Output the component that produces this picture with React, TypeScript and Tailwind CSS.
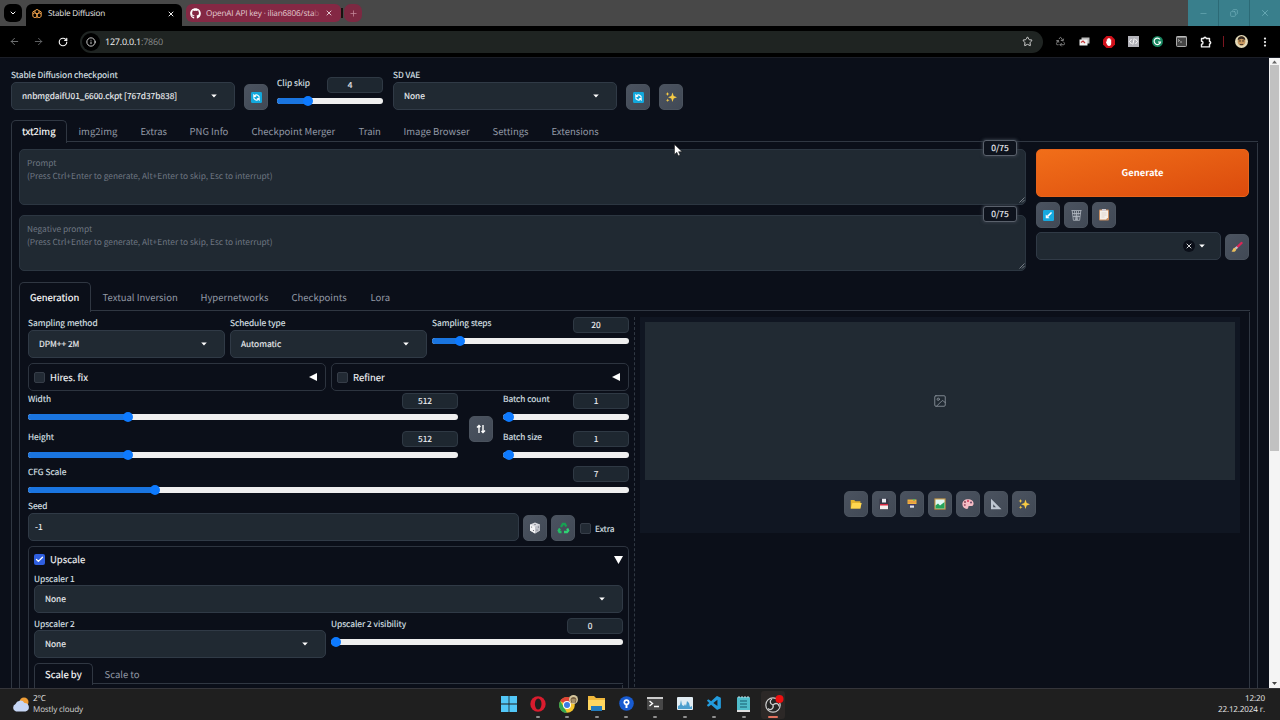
import React from "react";
import {
  ArrowLeft, ArrowRight, RotateCw, Info, Star, Minus, X, Plus, ChevronDown, Copy, Recycle, Image as ImageIcon, Check, MoreVertical,
} from "lucide-react";
import { FaGithub } from "react-icons/fa";
import { VscVscode } from "react-icons/vsc";

type Kids = { children?: React.ReactNode };

const Caret = () => (
  <svg width="6" height="4" viewBox="0 0 6 4" className="shrink-0"><path d="M.2.5h5.600L3 3.500z" fill="#fff" /></svg>
);

const Label = ({ children, low }: Kids & { low?: boolean }) => (
  <div className={`h-[13px] whitespace-nowrap text-[8.35px] ${low ? "leading-[14px]" : "leading-[12px]"} text-[#dfe3ea] [-webkit-text-stroke:0.12px_#dfe3ea]`}>{children}</div>
);

const Select = ({ value, w }: { value: string; w: string }) => (
  <div className={`flex h-[28px] ${w} shrink-0 items-center justify-between rounded-[5px] border border-[#303a46] bg-[#202932] pl-[10px] pr-[17px]`}>
    <span className="whitespace-nowrap text-[8.35px] leading-[14px] text-[#eef0f3] [-webkit-text-stroke:0.12px_#eef0f3]">{value}</span>
    <Caret />
  </div>
);

const Field = ({ label, low, children }: Kids & { label: string; low?: boolean }) => (
  <div className="flex flex-col"><Label low={low}>{label}</Label>{children}</div>
);

const Tool = ({ children, h = "h-[26px]" }: Kids & { h?: string }) => (
  <div className={`flex ${h} w-[24px] shrink-0 items-center justify-center rounded-[5px] border border-[#4a525d] bg-gradient-to-br from-[#4b5360] to-[#414955]`}>{children}</div>
);

const Slider = ({ label, value, w, fill }: { label: string; value: string; w: string; fill: number }) => (
  <div className={`${w} h-[27px] shrink-0`}>
    <div className="flex h-[16px] justify-between">
      <Label>{label}</Label>
      <div className="flex h-[16px] w-[56px] items-center justify-center rounded-[4px] border border-[#2f3944] bg-[#1e2730] pr-[10px] text-[8.4px] leading-[14px] text-[#eef0f3] [-webkit-text-stroke:0.12px_#eef0f3]">{value}</div>
    </div>
    <div className="relative mt-[5px] h-[6px] rounded-[3px] bg-[#efefef]">
      <div className="h-full rounded-l-[3px] bg-[#1a75e0]" style={{ width: fill }} />
      <div className="absolute top-[-2px] h-[10px] w-[10px] rounded-full bg-[#0d7aff]" style={{ left: fill - 5 }} />
    </div>
  </div>
);

const Tab = ({ children, active, w, h }: Kids & { active?: boolean; w: string; h: string }) => (
  <div className={`flex ${w} ${h} shrink-0 items-center whitespace-nowrap text-[9.5px] leading-[15px] ${active ? "rounded-t-[5px] border border-b-0 border-[#303742] bg-[#0b0f19] pb-[1px] pl-[10px] text-white [-webkit-text-stroke:0.12px_white]" : "border-b border-[#303742] pl-[11.500px] pt-[2px] text-[#9299a5]"}`}>{children}</div>
);

const Box = () => <div className="h-[11px] w-[11px] rounded-[2px] border border-[#363d48] bg-[#222a34]" />;

const Accordion = ({ label }: { label: string }) => (
  <div className="flex h-[28px] w-[298px] items-center rounded-[5px] border border-[#2d343f] pl-[5px] pr-[8px]">
    <Box />
    <span className="ml-[5px] flex-1 text-[9.5px] leading-[15px] text-[#f0f1f4] [-webkit-text-stroke:0.12px_#f0f1f4]">{label}</span>
    <svg width="8" height="8" viewBox="0 0 8 8"><path d="M8 0v8L0 4z" fill="#fff" /></svg>
  </div>
);

const Prompt = ({ label }: { label: string }) => (
  <div className="relative h-[56px] w-[1007px] rounded-[5px] border border-[#2c3641] bg-[#202932] pl-[7px] pt-[7px] text-[8.35px] leading-[13.4px] text-[#6f7782]">
    <div>{label}</div>
    <div>(Press Ctrl+Enter to generate, Alt+Enter to skip, Esc to interrupt)</div>
    <div className="absolute right-[8px] top-[-10px] flex h-[16px] w-[34px] items-center justify-center rounded-[3px] border border-[#5a616c] bg-[#0e131d] text-[8.5px] leading-[13px] text-[#eceef2] shadow-[0_0_3px_1px_#343b46] [-webkit-text-stroke:0.12px_#eceef2]">0/75</div>
    <svg className="absolute bottom-[1px] right-[0px]" width="6" height="6" viewBox="0 0 6 6"><path d="M0.5 5.500l5-5M3 5.500l2.500-2.500" stroke="#8b929b" strokeWidth=".8" /></svg>
  </div>
);

const Refresh = () => (
  <svg width="11" height="11" viewBox="0 0 12 12"><rect width="12" height="12" rx="1.500" fill="#12a8dc" /><g fill="none" stroke="#fff" strokeWidth="1.400"><path d="M4 4A3 3 0 0 1 9 6.300M8 8A3 3 0 0 1 3 5.700" /></g><path d="M2.500 2v3.400h3.400zM9.500 10V6.600H6.100z" fill="#fff" /></svg>
);
const Sparkles = () => (
  <svg width="12" height="12" viewBox="0 0 12 12" fill="#f7cb45"><path d="M7.500 1.500L8.700 5 12 6.300 8.700 7.500 7.500 11 6.300 7.500 3 6.300 6.300 5z" /><path d="M2.500 1l.6 1.400 1.400.6-1.400.6-.6 1.400-.6-1.400L.5 3l1.400-.6zM2.700 7.500l.5 1.300 1.300.5-1.300.5-.5 1.300-.5-1.300-1.300-.5 1.300-.5z" /></svg>
);
const Folder = () => (
  <svg width="12" height="12" viewBox="0 0 12 12"><path d="M.7 10.500v-8.500h3.500l1.200 1.300h5v7.200z" fill="#e5b52e" /><path d="M.7 10.600L2.400 4.900h9.300l-1.400 5.700z" fill="#ffd750" /></svg>
);
const Floppy = () => (
  <svg width="12" height="12" viewBox="0 0 12 12"><path d="M1.500.8h8L10.500 2v9.200h-9z" fill="#373746" /><path d="M4 .8h4v3.700H4z" fill="#e8ebf1" /><path d="M2 6h8v5.200H2z" fill="#f4eeee" /><path d="M2 6h8v1.500H2z" fill="#d82b43" /></svg>
);
const Archive = () => (
  <svg width="12" height="12" viewBox="0 0 12 12"><path d="M1.500 1.500h9v4.500h-9z" fill="#efb33d" /><path d="M2 3.500h8v1H2z" fill="#e08a4c" /><path d="M3 6h6v1.500H3z" fill="#433669" /><path d="M4 7.500h4v2.200H4z" fill="#dfe2ee" /><path d="M7 1h2v1.500H7z" fill="#55ae61" /></svg>
);
const Frame = () => (
  <svg width="12" height="12" viewBox="0 0 12 12"><rect x=".4" y=".4" width="11.200" height="11.200" fill="#c89a45" /><path d="M1.500 1.500h9v9h-9z" fill="#e0f7f4" /><path d="M1.500 10.500V7.500L4 5.500l2 2 4.500-3.500v6.500z" fill="#25a45a" /></svg>
);
const Palette = () => (
  <svg width="12" height="12" viewBox="0 0 12 12"><path d="M6 1.200C2.500 1.200.4 3.300.4 6c0 2.800 2 4.900 4.600 4.900 1.500 0 1.200-1.500 1.300-2.100.2-.9 1.500-.7 2.700-.7 1.600 0 2.600-1 2.600-2.600C11.600 3 9.500 1.200 6 1.200z" fill="#f5bcc4" /><circle cx="3" cy="4" r="1" fill="#8d4959" /><circle cx="6" cy="3" r="1" fill="#d33858" /><circle cx="9" cy="4.500" r="1" fill="#6e4969" /><circle cx="2.800" cy="7" r="1" fill="#a7566d" /></svg>
);
const Ruler = () => (
  <svg width="12" height="12" viewBox="0 0 12 12"><path d="M1 .8v10.400h10.500zm2.200 5.500l2.800 2.900H3.200z" fill="#bec6d1" fillRule="evenodd" /></svg>
);
const Dice = () => (
  <svg width="12" height="12" viewBox="0 0 12 12"><path d="M6 .6l5 2v6L6 11.500 1 8.600v-6z" fill="#d8d9df" /><path d="M1 2.600l5 2.200v6.700L1 8.600z" fill="#f4f4f6" /><path d="M6 4.800l5-2.200v6l-5 2.900z" fill="#bfc1c9" /><g fill="#5c5e69"><circle cx="6" cy="2.600" r=".7" /><circle cx="2.600" cy="5" r=".6" /><circle cx="4.500" cy="8.500" r=".6" /><circle cx="8" cy="8" r=".6" /><circle cx="9.500" cy="5" r=".6" /></g></svg>
);
const GreenRecycle = () => (
  <svg width="13" height="12" viewBox="0 0 13 12" fill="none" strokeWidth="2.300"><path d="M4 5l1.800-3h2l1.500 2.500" stroke="#17a052" /><path d="M10.200 6.500l1 2L10 10H7" stroke="#2fd274" /><path d="M4.500 10h-2l-.8-1.500L3 6.500" stroke="#22be65" /></svg>
);
const Arrow = () => (
  <svg width="11" height="11" viewBox="0 0 12 12"><rect width="12" height="12" rx="1.300" fill="#16a9df" /><path d="M9.300 2.700L5 7" stroke="#fff" strokeWidth="1.700" /><path d="M3 4.800v4.200h4.200z" fill="#fff" /></svg>
);
const Bin = () => (
  <svg width="11" height="12" viewBox="0 0 11 12" fill="none" stroke="#b5bbc4" strokeWidth=".8"><path d="M.5 1.500h10M1.200 1.500l1.200 9.800h6.200l1.200-9.800M3.500 2l1 9M5.500 2v9M7.500 2l-1 9M1.500 4.500h8M2 7.500h7" /></svg>
);
const Clipboard = () => (
  <svg width="10" height="12" viewBox="0 0 10 12"><rect y=".5" width="10" height="11" rx="1" fill="#c98f62" /><path d="M1 1.500h8v6.800l-2 2.200H1z" fill="#f5f0ea" /><path d="M3 0h4v2H3z" fill="#cfcad1" /><path d="M2.500 4h5M2.500 6h5M2.500 8h3" stroke="#d8ccc4" strokeWidth=".7" /></svg>
);
const Brush = () => (
  <svg width="12" height="12" viewBox="0 0 12 12"><path d="M10.500 2L5.800 6.500" stroke="#dd2557" strokeWidth="2.400" strokeLinecap="round" /><path d="M5.500 5.200L3.500 7l1.600 1.600 2-1.800z" fill="#c2c3ca" /><path d="M3.700 6.800c-2.200.2-1.300 2.500-3.200 3.500 2 1.100 4.400.5 4.700-1.900z" fill="#ecc05e" /></svg>
);

const tools = [Folder, Floppy, Archive, Frame, Palette, Ruler, Sparkles];

function BrowserChrome() {
  return (
    <>
      <div className="flex h-[26px] items-start bg-[#484848] font-['Open_Sans','Noto_Sans',sans-serif]">
        <div className="ml-[4px] mt-[4px] flex h-[18px] w-[18px] items-center justify-center rounded-[6px] bg-black"><ChevronDown size={8} strokeWidth={3} color="#fff" /></div>
        <div className="ml-[4px] mt-[4px] flex h-[22px] w-[156px] items-center rounded-t-[6px] bg-black pb-[3px]">
          <svg className="ml-[6px]" width="10" height="10" viewBox="0 0 24 24" fill="none" stroke="#f0a14b" strokeWidth="2.400"><path d="M12 1l5 3v5l-5 3-5-3V4zM7 9l5 3v6l-5 3-5-3v-6zM17 9l5 3v6l-5 3-5-3v-6z" /><path d="M7 4L2 7v5M17 4l5 3v5M12 18v4" /></svg>
          <span className="ml-[6px] flex-1 whitespace-nowrap text-[8.2px] leading-[12px] tracking-[-0.2px] text-[#e8e8e8]">Stable Diffusion</span>
          <X size={8} strokeWidth={2.800} color="#fff" className="mr-[7px]" />
        </div>
        <div className="ml-[4px] mt-[4px] flex h-[18px] w-[155px] items-center rounded-[6px] bg-[#842844]">
          <FaGithub size={11} color="#fff" className="ml-[4px] shrink-0" />
          <span className="ml-[5px] flex h-[12px] w-[115px] shrink-0 items-center whitespace-pre pt-[2px] text-[8.200px] leading-[12px] tracking-[-0.17px] text-[#e2c8d0]">OpenAI API key · ilian6806/sta<span className="text-[#a96279]">b</span></span>
          <X size={8} strokeWidth={2.500} color="#f4e4e9" className="ml-[4px] shrink-0" />
        </div>
        <div className="mt-[8px] h-[10px] w-[2px] bg-[#17120f]" />
        <div className="ml-[1px] mt-[4px] flex h-[18px] w-[18px] items-center justify-center rounded-[7px] bg-[#7c2942]"><Plus size={9} color="#c68a9b" /></div>
        <div className="ml-auto flex h-[26px] w-[92px] divide-x divide-[#2c6a76] bg-[#397f8c] text-[#74b2bd]">
          <div className="flex w-[31px] items-center justify-center"><Minus size={9} strokeWidth={1.500} /></div>
          <div className="flex w-[31px] items-center justify-center"><Copy size={8} className="-scale-x-100" /></div>
          <div className="flex flex-1 items-center justify-center"><X size={10} strokeWidth={1.800} /></div>
        </div>
      </div>
      <div className="flex h-[32px] items-center border-b border-[#1b1e27] bg-black font-['Open_Sans','Noto_Sans',sans-serif]">
        <ArrowLeft size={11} color="#77797b" className="ml-[9px]" />
        <ArrowRight size={11} color="#66686a" className="ml-[13px]" />
        <RotateCw size={10} strokeWidth={2.800} color="#f4f4f4" className="ml-[14px]" />
        <div className="ml-[12px] flex h-[22px] w-[963px] items-center rounded-full bg-[#1f2422] pl-[2px] pr-[10px]">
          <div className="flex h-[18px] w-[18px] items-center justify-center rounded-full bg-black"><Info size={10} color="#eee" /></div>
          <span className="ml-[5px] flex-1 text-[9px] leading-[13px] tracking-[-0.22px] text-[#888b8a]"><span className="text-[#f1f1f1]">127.0.0.1</span>:7860</span>
          <Star size={11} color="#ddd" />
        </div>
        <div className="ml-[12px] flex w-[157px] items-center justify-between">
          <Recycle size={11} color="#888" />
          <svg width="11" height="11" viewBox="0 0 11 11"><path d="M2.500 1.500h8v6h-8z" fill="#bbb" /><path d="M.5 3.500h8v6h-8z" fill="#f0f0f0" /><path d="M2 6.500l2-1.500 2 2" stroke="#c43b3b" strokeWidth="1.300" fill="none" /></svg>
          <svg width="12" height="12" viewBox="0 0 12 12"><path d="M3.500 0h5L12 3.500v5L8.500 12h-5L0 8.500v-5z" fill="#d0101a" /><path d="M3.800 4v-.8h.8V2.500h.9V2h.9v.5h.9v1h.9v3.700C8.200 9 7.500 10 6 10 4.600 10 3.800 8.500 3.300 7l-.5-1.200.9-.2z" fill="#fff" /></svg>
          <svg width="11" height="11" viewBox="0 0 11 11"><path fill="#b4b4ba" d="M0 0h11v11H0z" /><path d="M3.500 3L1.500 5.500l2 2.500M7.500 3l2 2.500-2 2.500M6.200 2.500L4.800 8.500" stroke="#fff" fill="none" /></svg>
          <svg width="11" height="11" viewBox="0 0 11 11"><circle cx="5.500" cy="5.500" r="5.500" fill="#188660" /><path d="M8 3.500A3.200 3.200 0 1 0 8.500 6H6" stroke="#fff" strokeWidth="1.200" fill="none" /></svg>
          <svg width="11" height="11" viewBox="0 0 11 11"><rect x=".5" y=".5" width="10" height="10" rx="1" fill="#444" stroke="#aaa" /><path d="M.5 1h10" stroke="#ccc" /><path d="M2 3.500l1.500 1L2 5.500M4 6h2" stroke="#ddd" strokeWidth=".7" fill="none" /></svg>
          <svg width="12" height="12" viewBox="0 0 12 12" fill="none" stroke="#f0f0f0" strokeWidth="1.400"><path d="M1.500 2.500h2.300a1.200 1.200 0 0 1 2.400 0h3.300v3a1.200 1.200 0 0 1 0 2.400v3h-8V8.200a1.500 1.500 0 0 0 0-3z" strokeLinejoin="round" /></svg>
        </div>
        <div className="ml-[11px] h-[11px] w-[1px] bg-[#7b1620]" />
        <svg className="ml-[11px]" width="13" height="13" viewBox="0 0 12 12"><circle cx="6" cy="6" r="6" fill="#e3dab9" /><path d="M2.500 5c0-5 7-5 7 0v2c-1 4-6 4-7 0z" fill="#c7975f" /><path d="M2.500 4.500c0-4.500 7-4.500 7 0L6 3.500z" fill="#372b22" /><path d="M3.500 5.500h2M6.500 5.500h2M4.500 8.800h3" stroke="#302820" strokeWidth=".8" /></svg>
        <MoreVertical size={12} strokeWidth={2.500} color="#eee" className="ml-[11px]" />
      </div>
    </>
  );
}

function Generation() {
  return (
    <div className="w-[601px] shrink-0">
      <div className="flex h-[46px] gap-[5px]">
        <Field label="Sampling method"><Select value="DPM++ 2M" w="w-[197px]" /></Field>
        <Field label="Schedule type"><Select value="Automatic" w="w-[197px]" /></Field>
        <div><Slider label="Sampling steps" value="20" w="w-[197px]" fill={28} /></div>
      </div>
      <div className="flex gap-[5px]"><Accordion label="Hires. fix" /><Accordion label="Refiner" /></div>
      <div className="mt-[2px] flex h-[73px]">
        <div className="flex flex-col gap-[11px]">
          <Slider label="Width" value="512" w="w-[430px]" fill={100} />
          <Slider label="Height" value="512" w="w-[430px]" fill={100} />
        </div>
        <div className="ml-[11px] mr-[10px] mt-[23px]"><Tool><svg width="10" height="10" viewBox="0 0 10 10" stroke="#fff" strokeWidth="1.400" fill="none"><path d="M3 9V1.500M1 3.500l2-2 1.500 1.500M7 1v7.500M5.500 7L7 8.500l2-2" /></svg></Tool></div>
        <div className="flex flex-col gap-[11px]">
          <Slider label="Batch count" value="1" w="w-[126px]" fill={6} />
          <Slider label="Batch size" value="1" w="w-[126px]" fill={6} />
        </div>
      </div>
      <Slider label="CFG Scale" value="7" w="w-[601px]" fill={127} />
      <div className="mt-[7px]"><Label>Seed</Label></div>
      <div className="flex h-[28px] items-end">
        <div className="flex h-[28px] w-[491px] items-center rounded-[5px] border border-[#303a46] bg-[#202932] pl-[6px] text-[8.4px] leading-[14px] text-[#eef0f3] [-webkit-text-stroke:0.12px_#eef0f3]">-1</div>
        <div className="ml-[4px]"><Tool><Dice /></Tool></div>
        <div className="ml-[4px]"><Tool><GreenRecycle /></Tool></div>
        <div className="ml-[5px] flex h-[26px] items-center gap-[4px]"><Box /><Label low>Extra</Label></div>
      </div>
      <div className="mt-[5px] h-[160px] rounded-t-[5px] border border-b-0 border-[#2d343f] px-[5px]">
        <div className="flex h-[25px] items-center">
          <div className="flex h-[11px] w-[11px] items-center justify-center rounded-[2px] bg-[#2f5fe0]"><Check size={9} strokeWidth={3.500} color="#fff" /></div>
          <span className="ml-[5px] flex-1 text-[9.5px] leading-[15px] text-[#f0f1f4] [-webkit-text-stroke:0.12px_#f0f1f4]">Upscale</span>
          <svg width="9" height="8" viewBox="0 0 9 8"><path d="M0 0h9L4.500 8z" fill="#fff" /></svg>
        </div>
        <Field low label="Upscaler 1"><Select value="None" w="w-[589px]" /></Field>
        <div className="mt-[4px] flex gap-[5px]">
          <Field low label="Upscaler 2"><Select value="None" w="w-[292px]" /></Field>
          <div className="pt-[1px]"><Slider label="Upscaler 2 visibility" value="0" w="w-[292px]" fill={5} /></div>
        </div>
        <div className="mt-[5px] flex">
          <Tab active w="w-[59px]" h="h-[22px]">Scale by</Tab>
          <Tab w="w-[72px]" h="h-[21px]">Scale to</Tab>
          <div className="h-[21px] flex-1 border-b border-[#303742]" />
        </div>
        <div className="h-[10px] border-x border-[#303742]" />
      </div>
    </div>
  );
}

function Taskbar() {
  return (
    <div className="flex h-[32px] items-center border-t border-[#35353a] bg-[#1f1f1f] font-['Open_Sans','Noto_Sans',sans-serif] text-[8.1px] leading-[10.5px] tracking-[-0.15px] text-[#ececec]">
      <div className="flex w-[488px] items-center pl-[12px]">
        <svg width="18" height="16" viewBox="0 0 18 16"><circle cx="12" cy="5" r="4.500" fill="#ef9e37" /><path d="M4 14.500a4 4 0 0 1-.5-7.500A5 5 0 0 1 12.500 6a4.300 4.300 0 0 1 1 8.500z" fill="#c6d6f5" /></svg>
        <div className="ml-[3px]"><div>2°C</div><div className="text-[#d0d0d0]">Mostly cloudy</div></div>
      </div>
      <div className="flex items-center gap-[5.400px]">
        {[
          <svg key="w" width="16" height="16" viewBox="0 0 16 16" fill="#52c7f7"><path d="M0 0h7.600v7.600H0zM8.400 0H16v7.600H8.400zM0 8.400h7.600V16H0zM8.400 8.400H16V16H8.400z" /></svg>,
          <svg key="o" width="16" height="16" viewBox="0 0 16 16"><circle cx="8" cy="8" r="7.700" fill="#d91c2e" /><ellipse cx="8.200" cy="8" rx="3.300" ry="5.500" fill="#1f1f1f" /></svg>,
          <svg key="c" className="ml-[4px] shrink-0" width="20" height="18" viewBox="0 0 20 18"><circle cx="8" cy="10" r="7.800" fill="#f5c52c" /><path d="M1.200 6A7.800 7.800 0 0 1 14.800 6L8 10z" fill="#e04437" /><path d="M1.200 6l5 8.500L8 17.800A7.800 7.800 0 0 1 1.200 6z" fill="#31a652" /><circle cx="8" cy="10" r="4" fill="#fff" /><circle cx="8" cy="10" r="3" fill="#3e7ce4" /><circle cx="14.500" cy="4.500" r="4.500" fill="#d5c69c" /><path d="M11.500 5c0-4 6-4 6 0l-1 3h-4z" fill="#776043" /><path d="M12.500 5h4M13 7h3" stroke="#e9d5a2" strokeWidth=".8" /></svg>,
          <svg key="f" width="17" height="15" viewBox="0 0 17 15"><path d="M0 0h6l2 2h9v12H0z" fill="#f0b83c" /><path d="M0 4h17v10H0z" fill="#ffd760" /><path d="M3 10h11v5H3z" fill="#237cbe" /></svg>,
          <svg key="s" width="15" height="15" viewBox="0 0 15 15"><circle cx="7.500" cy="7.500" r="7.300" fill="#185bd1" /><circle cx="7.500" cy="6.200" r="3" fill="#fff" /><path d="M6.500 7h2v5h-2z" fill="#fff" /><circle cx="7.500" cy="6.200" r="1.200" fill="#185bd1" /></svg>,
          <svg key="t" width="16" height="13" viewBox="0 0 16 13"><rect width="16" height="13" rx="1" fill="#474747" /><path fill="#ccc" d="M0 0h16v2H0z" /><path d="M2.500 4l3 2.500-3 2.500M7 9.500h5" stroke="#fff" strokeWidth="1.400" fill="none" /></svg>,
          <svg key="m" width="16" height="13" viewBox="0 0 16 13"><rect width="16" height="13" rx="1" fill="#e2edf3" /><path d="M1 12V9l2-1 1-5 1 5 2 1 1-2 1 2 1-5 2 2 1 4 2-1v3z" fill="#4d9fce" /></svg>,
          <VscVscode key="v" size={17} color="#239cdd" />,
          <svg key="n" width="13" height="16" viewBox="0 0 13 16"><rect y="1" width="13" height="15" rx="1" fill="#50bdcb" /><path d="M2 0v2M5 0v2M8 0v2M11 0v2" stroke="#c7dce0" /><path d="M3 5h7M3 8h7M3 11h7" stroke="#175d70" strokeWidth="1.200" /><path d="M0 14h13v2H0z" fill="#dfdfdf" /></svg>,
          <svg key="b" width="19" height="18" viewBox="0 0 19 18" className="ml-[2px] shrink-0"><circle cx="8" cy="10" r="7.200" fill="#252525" stroke="#cfcfcf" strokeWidth="1.200" /><path d="M8 10C4.500 9 4.500 5.500 7 4M8 10c3-3 6-1 6 1.500M8 10c1 3.500-2.500 6-5 3.500" stroke="#ccc" strokeWidth="1.300" fill="none" /><circle cx="14.500" cy="4" r="4" fill="#ef1010" /></svg>,
        ].map((icon, i) => (
          <div key={i} className={`relative flex h-[28px] w-[24px] items-center justify-center rounded-[3px] pb-[2px] ${i === 9 ? "bg-[#2c2827]" : ""} ${i === 0 ? "ml-[8.500px]" : ""}`}>
            {icon}
            {i > 0 && <div className={`absolute bottom-[1px] h-[2px] rounded ${i === 9 ? "w-[10px] bg-[#e2715e]" : "w-[4px] bg-[#8f8f8f]"}`} />}
          </div>
        ))}
      </div>
      <div className="ml-auto pr-[15px] text-right"><div>12:20</div><div>22.12.2024 г.</div></div>
    </div>
  );
}

export default function App() {
  return (
    <div className="relative flex h-[720px] w-[1280px] flex-col overflow-hidden bg-[#0b0f19] font-['Noto_Sans_CJK_SC',sans-serif] [text-rendering:geometricPrecision]">
      <BrowserChrome />
      <div className="flex h-[630px] shrink-0 overflow-hidden">
        <div className="h-[630px] w-[1269px] overflow-hidden pl-[11px]">
          <div className="flex h-[62px] items-start pt-[11px]">
            <Field label="Stable Diffusion checkpoint"><Select value="nnbmgdaifU01_6600.ckpt [767d37b838]" w="w-[224px]" /></Field>
            <div className="ml-[9px] mt-[15px]"><Tool><Refresh /></Tool></div>
            <div className="ml-[9px] mt-[8px]"><Slider label="Clip skip" value="4" w="w-[106px]" fill={31} /></div>
            <div className="ml-[10px]"><Field label="SD VAE"><Select value="None" w="w-[224px]" /></Field></div>
            <div className="ml-[9px] mt-[15px]"><Tool><Refresh /></Tool></div>
            <div className="ml-[9px] mt-[15px]"><Tool><Sparkles /></Tool></div>
          </div>
          <div className="flex w-[1247px]">
            <Tab active w="w-[56px]" h="h-[23px]">txt2img</Tab>
            <Tab w="w-[62px]" h="h-[22px]">img2img</Tab>
            <Tab w="w-[49px]" h="h-[22px]">Extras</Tab>
            <Tab w="w-[62px]" h="h-[22px]">PNG Info</Tab>
            <Tab w="w-[107px]" h="h-[22px]">Checkpoint Merger</Tab>
            <Tab w="w-[45px]" h="h-[22px]">Train</Tab>
            <Tab w="w-[89px]" h="h-[22px]">Image Browser</Tab>
            <Tab w="w-[59px]" h="h-[22px]">Settings</Tab>
            <Tab w="w-[66px]" h="h-[22px]">Extensions</Tab>
            <div className="h-[22px] flex-1 border-b border-[#303742]" />
          </div>
          <div className="h-[560px] w-[1247px] border-x border-[#303742] px-[7px] pt-[6px]">
            <div className="flex h-[133px] gap-[10px]">
              <div className="flex flex-col gap-[10px]"><Prompt label="Prompt" /><Prompt label="Negative prompt" /></div>
              <div className="flex w-[213px] flex-col">
                <div className="flex h-[48px] items-center justify-center rounded-[5px] border border-[#e8641b] bg-gradient-to-br from-[#f16e19] to-[#db4b0d] pb-[1px] text-[9.4px] font-bold text-white">Generate</div>
                <div className="mt-[5px] flex gap-[4px]"><Tool><Arrow /></Tool><Tool><Bin /></Tool><Tool><Clipboard /></Tool></div>
                <div className="mt-[4px] flex items-end justify-between">
                  <div className="flex h-[28px] w-[185px] items-center justify-end gap-[4px] rounded-[5px] border border-[#303a46] bg-[#202932] pr-[15px]">
                    <div className="flex h-[12px] w-[12px] items-center justify-center rounded-full bg-[#0b0f19]"><X size={8} strokeWidth={2.500} color="#fff" /></div><Caret />
                  </div>
                  <Tool><Brush /></Tool>
                </div>
              </div>
            </div>
            <div className="flex w-[1231px]">
              <Tab active w="w-[72px]" h="h-[30px]">Generation</Tab>
              <Tab w="w-[98px]" h="h-[29px]">Textual Inversion</Tab>
              <Tab w="w-[91px]" h="h-[29px]">Hypernetworks</Tab>
              <Tab w="w-[79px]" h="h-[29px]">Checkpoints</Tab>
              <Tab w="w-[60px]" h="h-[29px]">Lora</Tab>
              <div className="h-[29px] flex-1 border-b border-[#303742]" />
            </div>
            <div className="flex w-[1231px] border-x border-[#303742] pl-[8px] pt-[5px]">
              <Generation />
              <div className="ml-[5px] h-[390px] border-l border-dashed border-[#303843]" />
              <div className="ml-[5px] h-[216px] w-[600px] bg-[#101622] px-[5px] pt-[5px]">
                <div className="flex h-[158px] items-center justify-center bg-[#212a33]"><ImageIcon size={14} strokeWidth={1.500} color="#8a929b" /></div>
                <div className="mt-[11px] flex justify-center gap-[4.100px]">{tools.map((Glyph, i) => <Tool key={i}><Glyph /></Tool>)}</div>
              </div>
            </div>
          </div>
        </div>
        <div className="flex w-[11px] flex-col items-center bg-[#f4f4f4]">
          <svg width="11" height="7" viewBox="0 0 11 7"><path d="M3 5.500h5L5.500 2.500z" fill="#666" /></svg>
          <div className="h-[386px] w-[9px] bg-[#c1c1c1]" />
          <svg className="mt-auto" width="11" height="9" viewBox="0 0 11 9"><path d="M3 3h5L5.500 6z" fill="#444" /></svg>
        </div>
      </div>
      <Taskbar />
      <svg className="absolute left-[674px] top-[144px]" width="9" height="13" viewBox="0 0 9 13"><path d="M.5.500v10l2.300-2.200 1.500 3.500 1.800-.8-1.500-3.300h3.500z" fill="#fff" stroke="#111" strokeWidth=".5" /></svg>
    </div>
  );
}
